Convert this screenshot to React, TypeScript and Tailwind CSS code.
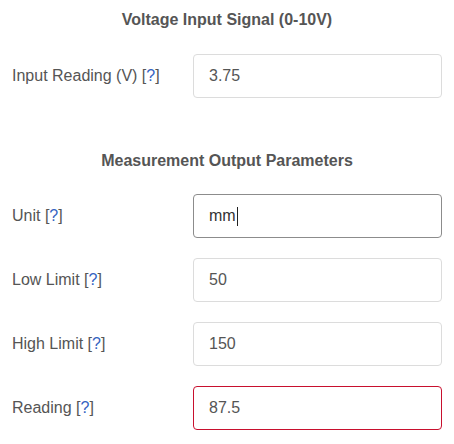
const FONT = { fontFamily: '"Liberation Sans", Arial, sans-serif' };

type Row = {
  label: string;
  value: string;
  state?: "focus" | "error";
};

const INPUT_ROWS: Row[] = [{ label: "Input Reading (V)", value: "3.75" }];

const OUTPUT_ROWS: Row[] = [
  { label: "Unit", value: "mm", state: "focus" },
  { label: "Low Limit", value: "50" },
  { label: "High Limit", value: "150" },
  { label: "Reading", value: "87.5", state: "error" },
];

function FieldRow({ row }: { row: Row }) {
  const border =
    row.state === "focus"
      ? "border-[#8c8c8c] text-[#333]"
      : row.state === "error"
        ? "border-[#c8102e] text-[#555]"
        : "border-[#dcdcdc] text-[#555]";

  return (
    <div className="flex items-center h-11">
      <label className="w-[181px] shrink-0 text-[16px] text-[#555]">
        {row.label} [<span className="text-[#3563c1]">?</span>]
      </label>
      {row.state === "focus" ? (
        // focused field, drawn with its caret
        <div className={`flex-1 h-11 flex items-center rounded-[4px] border bg-white px-[15px] text-[16px] ${border}`}>
          {row.value}
          <span className="ml-px w-px h-[19px] bg-[#222]" />
        </div>
      ) : (
        <input
          readOnly
          value={row.value}
          style={FONT}
          className={`flex-1 min-w-0 h-11 rounded-[4px] border bg-white px-[15px] text-[16px] outline-none ${border}`}
        />
      )}
    </div>
  );
}

export default function App() {
  return (
    <div className="w-[454px] h-[444px] bg-white px-3 pt-[10px]" style={FONT}>
      {/* Voltage input */}
      <h3 className="text-center text-[16px] leading-5 font-bold text-[#555] mb-6">
        Voltage Input Signal (0-10V)
      </h3>
      <div className="flex flex-col gap-5">
        {INPUT_ROWS.map((row) => (
          <FieldRow key={row.label} row={row} />
        ))}
      </div>

      {/* Measurement output */}
      <h3 className="text-center text-[16px] leading-5 font-bold text-[#555] mt-[53px] mb-[23px]">
        Measurement Output Parameters
      </h3>
      <div className="flex flex-col gap-5">
        {OUTPUT_ROWS.map((row) => (
          <FieldRow key={row.label} row={row} />
        ))}
      </div>
    </div>
  );
}
